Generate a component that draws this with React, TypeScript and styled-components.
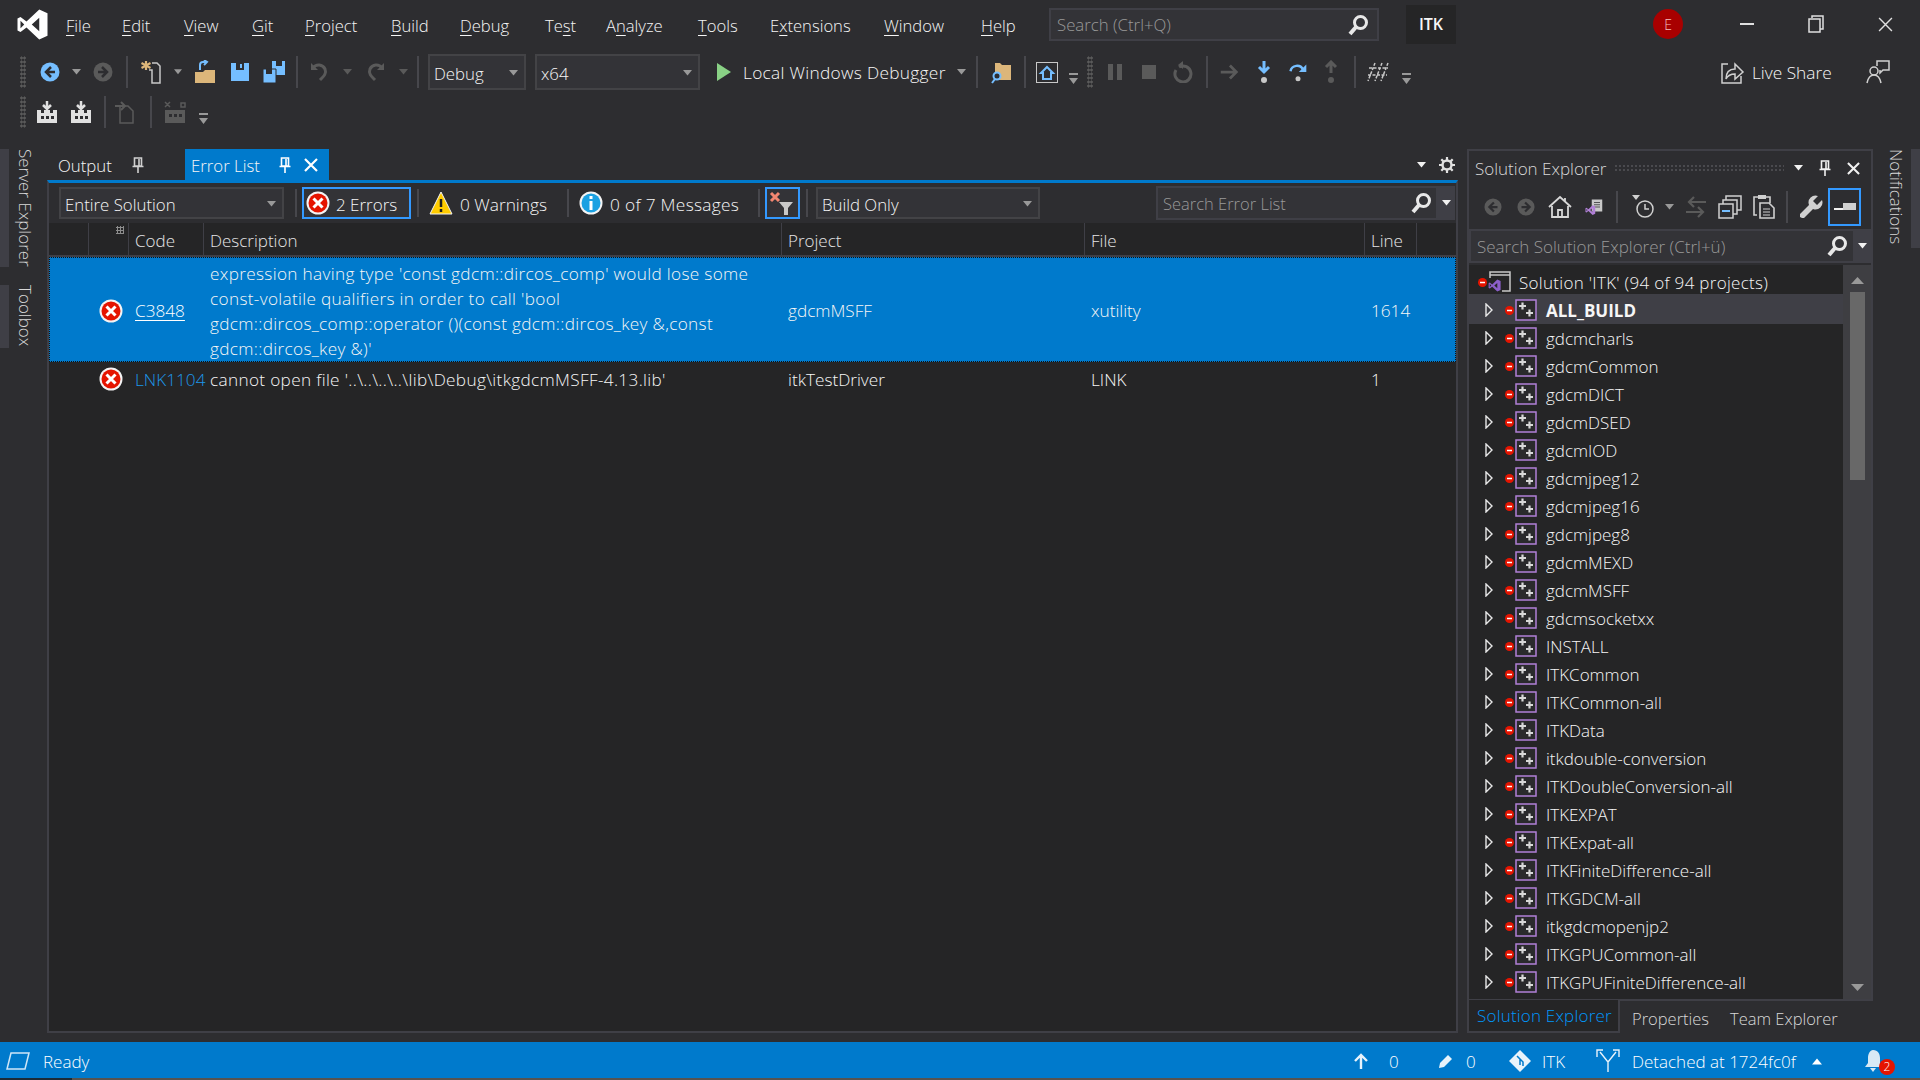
import { ReactNode } from 'react';
import styled, { createGlobalStyle } from 'styled-components';

const GlobalStyle = createGlobalStyle`
  *, *::before, *::after { box-sizing: border-box; }
  html, body { margin: 0; padding: 0; background: #2d2d30; }
  body { font-family: "Open Sans", "Noto Sans", sans-serif; font-size: 16px; font-weight: 300; color: #f6f6f6; overflow: hidden; }
`;

const MENU: Array<[string, string, string, number]> = [
  ['', 'F', 'ile', 56],
  ['', 'E', 'dit', 62],
  ['', 'V', 'iew', 68],
  ['', 'G', 'it', 53],
  ['', 'P', 'roject', 86],
  ['', 'B', 'uild', 69],
  ['', 'D', 'ebug', 85],
  ['Te', 's', 't', 61],
  ['A', 'n', 'alyze', 92],
  ['', 'T', 'ools', 72],
  ['E', 'x', 'tensions', 114],
  ['', 'W', 'indow', 97],
  ['', 'H', 'elp', 68],
];

const PROJECTS = [
  'ALL_BUILD', 'gdcmcharls', 'gdcmCommon', 'gdcmDICT', 'gdcmDSED', 'gdcmIOD', 'gdcmjpeg12', 'gdcmjpeg16',
  'gdcmjpeg8', 'gdcmMEXD', 'gdcmMSFF', 'gdcmsocketxx', 'INSTALL', 'ITKCommon', 'ITKCommon-all', 'ITKData',
  'itkdouble-conversion', 'ITKDoubleConversion-all', 'ITKEXPAT', 'ITKExpat-all', 'ITKFiniteDifference-all',
  'ITKGDCM-all', 'itkgdcmopenjp2', 'ITKGPUCommon-all', 'ITKGPUFiniteDifference-all',
];

const VS_PATH = 'M15.5 1L21 3.5v15L15.5 21 7 13l-4 3-2-1V7l2-1 4 3zM15.5 6.5L10.5 11l5 4.5zM3 8.5v5L5.5 11z';

const Svg = ({ s = 20, v = 20, children }: { s?: number; v?: number; children: ReactNode }) => (
  <svg width={s} height={s} viewBox={`0 0 ${v} ${v}`} fill="none">{children}</svg>
);

const Caret = ({ c = '#999' }: { c?: string }) => (
  <svg width="9" height="6" viewBox="0 0 9 6"><path d="M0 0h9L4.5 5.5z" fill={c} /></svg>
);

const Overflow = () => (
  <svg width="9" height="12" viewBox="0 0 9 12"><path d="M0 0h9v2H0zM0 5h9L4.5 11z" fill="#999" /></svg>
);

const NavBack = ({ c = '#75beff', s = 20 }: { c?: string; s?: number }) => (
  <Svg s={s}><circle cx="10" cy="10" r="9.5" fill={c} /><path d="M11 5l-5 5 5 5M6 10h9" stroke="#2d2d30" strokeWidth="2.5" /></Svg>
);

const NavFwd = ({ c = '#5a5a5a', s = 20 }: { c?: string; s?: number }) => (
  <Svg s={s}><circle cx="10" cy="10" r="9.5" fill={c} /><path d="M9 5l5 5-5 5M14 10H5" stroke="#2d2d30" strokeWidth="2.5" /></Svg>
);

const NewProject = () => (
  <Svg s={24} v={24}>
    <path d="M12 3h5l3 3v17h-8V10H9" stroke="#c8c8c8" strokeWidth="1.5" />
    <path d="M6 1v9M1.5 3l9 5M10.5 3l-9 5" stroke="#dcb67a" strokeWidth="2.2" />
  </Svg>
);

const OpenFolder = () => (
  <Svg s={24} v={24}>
    <path d="M2 12h8l2-2h10v13H2z" fill="#dcb67a" />
    <path d="M7 10V5a3 3 0 0 1 3-3l3 0M11 0l3 2-3 3" stroke="#75beff" strokeWidth="2" />
  </Svg>
);

const SaveIcon = () => (
  <Svg s={20}>
    <path d="M1 1h18v18H1z" fill="#75beff" />
    <path d="M6 1h8v7H6z" fill="#2d2d30" />
    <path d="M10 2h2v4h-2z" fill="#75beff" />
  </Svg>
);

const SaveAll = () => (
  <Svg s={24} v={24}>
    <path d="M10 1h13v14H10z" fill="#75beff" /><path d="M14 1h6v5h-6z" fill="#2d2d30" />
    <path d="M1 9h13v14H1z" fill="#75beff" stroke="#2d2d30" /><path d="M4 9h6v5H4z" fill="#2d2d30" />
  </Svg>
);

const Undo = () => (
  <Svg s={24} v={24}>
    <path d="M3 3v7h7z" fill="#5a5a5a" />
    <path d="M5 8a7 7 0 0 1 12 1c2 5-2 8-5 11" stroke="#5a5a5a" strokeWidth="3" />
  </Svg>
);

const Redo = () => (
  <Svg s={24} v={24}>
    <path d="M21 3v7h-7z" fill="#5a5a5a" />
    <path d="M19 8a7 7 0 0 0-12 1c-2 5 2 8 5 11" stroke="#5a5a5a" strokeWidth="3" />
  </Svg>
);

const Play = () => (
  <svg width="14" height="18" viewBox="0 0 14 18"><path d="M0 0l14 9-14 9z" fill="#89d185" /></svg>
);

const FindFolder = () => (
  <Svg s={24} v={24}>
    <path d="M6 3h5l2 2h9v15H6z" fill="#dcb67a" />
    <circle cx="8" cy="16" r="3.5" fill="#2d2d30" stroke="#75beff" strokeWidth="2" />
    <path d="M6 19l-3 4" stroke="#75beff" strokeWidth="2" />
  </Svg>
);

const HomeBox = () => (
  <Svg s={24} v={24}>
    <rect x="1.5" y="2.5" width="21" height="20" stroke="#c8c8c8" />
    <path d="M12 7l6 6h-2v6h-8v-6H6z" stroke="#75beff" strokeWidth="2" />
  </Svg>
);

const Pause = () => (
  <svg width="14" height="16" viewBox="0 0 14 16"><path d="M0 0h5v16H0zM9 0h5v16H9z" fill="#5a5a5a" /></svg>
);

const StopIcon = () => (
  <svg width="14" height="14" viewBox="0 0 14 14"><path d="M0 0h14v14H0z" fill="#5a5a5a" /></svg>
);

const Restart = () => (
  <Svg s={22} v={22}>
    <path d="M7 6a8 8 0 1 1-3 3" stroke="#5a5a5a" strokeWidth="3" />
    <path d="M11 0v8L6 4z" fill="#5a5a5a" />
  </Svg>
);

const NextArrow = () => (
  <Svg s={24} v={24}><path d="M3 12h17M13 5l7 7-7 7" stroke="#5a5a5a" strokeWidth="3" /></Svg>
);

const StepInto = () => (
  <Svg s={24} v={24}>
    <path d="M12 1v10M7 7l5 5 5-5" stroke="#75beff" strokeWidth="3" />
    <circle cx="12" cy="20" r="3" fill="#c8c8c8" />
  </Svg>
);

const StepOver = () => (
  <Svg s={24} v={24}>
    <path d="M3 11a8 8 0 0 1 15-2" stroke="#75beff" strokeWidth="3" />
    <path d="M22 3v9h-9z" fill="#75beff" />
    <circle cx="12" cy="20" r="3" fill="#c8c8c8" />
  </Svg>
);

const StepOut = () => (
  <Svg s={24} v={24}>
    <path d="M12 13V3M7 7l5-5 5 5" stroke="#5a5a5a" strokeWidth="3" />
    <circle cx="12" cy="20" r="3" fill="#5a5a5a" />
  </Svg>
);

const CommentIcon = () => (
  <Svg s={24} v={24}>
    <path d="M9 3L2 21M16 3L9 21M22 3l-7 18M3 8h19M2 15h19" stroke="#c8c8c8" strokeWidth="1.5" strokeDasharray="3 1.5" />
  </Svg>
);

const BuildIcon = ({ c = '#e0e0e0' }: { c?: string }) => (
  <Svg s={24} v={24}>
    <path d="M12 1v7M8 5l4 4 4-4" stroke={c} strokeWidth="2.5" />
    <path d="M2 10h4v3h3v-3h6v3h3v-3h4v13H2z" fill={c} />
    <path d="M6 16h3v3H6zM11 16h3v3h-3zM16 16h3v3h-3z" fill="#2d2d30" />
  </Svg>
);

const PageIn = () => (
  <Svg s={24} v={24}>
    <path d="M6 6h8l5 5v12H6z" stroke="#5a5a5a" strokeWidth="1.5" />
    <path d="M1 6h9M7 2l4 4-4 4" stroke="#5a5a5a" strokeWidth="2" />
  </Svg>
);

const BuildOff = () => (
  <Svg s={24} v={24}>
    <path d="M2 2l5 5M7 2L2 7M18 3h4v4h-4z" stroke="#5a5a5a" strokeWidth="1.5" />
    <path d="M2 10h20v13H2z" fill="#5a5a5a" />
    <path d="M6 14h3v3H6zM11 14h3v3h-3zM16 14h3v3h-3z" fill="#2d2d30" />
  </Svg>
);

const ShareIcon = () => (
  <Svg s={26} v={26}>
    <path d="M9 5H3v19h19v-7" stroke="#d0d0d0" strokeWidth="1.5" />
    <path d="M7 20c0-7 4-10 9-10V5l8 8-8 7v-5c-4 0-7 1-9 5z" stroke="#d0d0d0" strokeWidth="1.5" />
  </Svg>
);

const FeedbackIcon = () => (
  <Svg s={24} v={24}>
    <circle cx="8" cy="11" r="4" stroke="#d0d0d0" strokeWidth="1.5" />
    <path d="M1 23c1-5 3-8 7-8s6 3 7 8M11 6V1h12v9h-6l-3 3v-3" stroke="#d0d0d0" strokeWidth="1.5" />
  </Svg>
);

const Magnifier = ({ s = 22 }: { s?: number }) => (
  <Svg s={s} v={22}>
    <circle cx="13.5" cy="8.5" r="6" stroke="#e8e8e8" strokeWidth="3" />
    <path d="M9 13l-6 7" stroke="#e8e8e8" strokeWidth="4" />
  </Svg>
);

const PinIcon = ({ c = '#d0d0d0' }: { c?: string }) => (
  <svg width="12" height="16" viewBox="0 0 12 16"><path d="M2.5 1h7v8h-7zM7 2v7M0.500 9.5h11M6 10v6" stroke={c} strokeWidth="1.6" fill="none" /></svg>
);

const CloseX = ({ s = 14, w = 2, c = '#f1f1f1' }: { s?: number; w?: number; c?: string }) => (
  <svg width={s} height={s} viewBox="0 0 14 14"><path d="M1 1l12 12M13 1L1 13" stroke={c} strokeWidth={w} /></svg>
);

const Gear = () => (
  <Svg s={16} v={16}>
    <circle cx="8" cy="8" r="4.5" stroke="#e0e0e0" strokeWidth="2.5" />
    <path d="M8 0v3M8 13v3M0 8h3M13 8h3M2.3 2.3l2.1 2.1M11.6 11.6l2.1 2.1M13.7 2.3l-2.1 2.1M4.4 11.6l-2.1 2.1" stroke="#e0e0e0" strokeWidth="2.2" />
  </Svg>
);

const ErrorIcon = () => (
  <Svg s={24} v={24}>
    <circle cx="12" cy="12" r="11.5" fill="#f4f4f4" />
    <circle cx="12" cy="12" r="9.5" fill="#e51400" />
    <path d="M7.5 7.5l9 9M16.5 7.5l-9 9" stroke="#fff" strokeWidth="3" />
  </Svg>
);

const WarningIcon = () => (
  <Svg s={24} v={24}>
    <path d="M12 1l11 22H1z" fill="#ffcc00" stroke="#f4f4f4" />
    <path d="M12 8v8M12 18v3" stroke="#1e1e1e" strokeWidth="2.5" />
  </Svg>
);

const InfoIcon = () => (
  <Svg s={24} v={24}>
    <circle cx="12" cy="12" r="11.5" fill="#f4f4f4" />
    <circle cx="12" cy="12" r="9.5" fill="#1ba1e2" />
    <path d="M12 10v9M12 5v3" stroke="#fff" strokeWidth="3" />
  </Svg>
);

const FilterError = () => (
  <Svg s={26} v={26}>
    <path d="M2 3l8 8M10 3l-8 8" stroke="#f48771" strokeWidth="3" />
    <path d="M10 12h14l-5 6v7h-4v-7z" fill="#c8c8c8" />
  </Svg>
);

const HomeIcon = () => (
  <Svg s={24} v={24}>
    <path d="M1 12L12 2l11 10M4 11v11h16V11M10 22v-7h4v7M17 3v4" stroke="#d8d8d8" strokeWidth="1.8" />
  </Svg>
);

const VsDoc = () => (
  <svg width="24" height="24" viewBox="0 0 24 24">
    <path d="M9 2h14v16H9z" fill="#c8c8c8" />
    <path d="M12 6h8M12 9h8M12 12h8" stroke="#2d2d30" />
    <path transform="translate(0 9) scale(.65)" fillRule="evenodd" d={VS_PATH} fill="#b180d7" />
  </svg>
);

const HistoryIcon = () => (
  <Svg s={28} v={28}>
    <path d="M1 2h8L5 7z" fill="#d0d0d0" />
    <circle cx="14" cy="16" r="8" stroke="#d0d0d0" strokeWidth="1.5" />
    <path d="M14 11v5h4" stroke="#d0d0d0" strokeWidth="1.5" />
  </Svg>
);

const SyncIcon = () => (
  <Svg s={24} v={24}>
    <path d="M22 7H5M10 2L5 7l5 5M2 17h17M14 12l5 5-5 5" stroke="#5a5a5a" strokeWidth="2.2" />
  </Svg>
);

const CollapseAll = () => (
  <Svg s={24} v={24}>
    <path d="M8 5V1h15v14h-4M5 9V5h14v14h-4" stroke="#d0d0d0" strokeWidth="1.5" />
    <path d="M1 9h14v14H1z" fill="#2d2d30" stroke="#d0d0d0" strokeWidth="1.5" />
    <path d="M4 16h8" stroke="#75beff" strokeWidth="2" />
  </Svg>
);

const PagesIcon = () => (
  <Svg s={24} v={24}>
    <path d="M5 20H2V2h16v6" stroke="#d0d0d0" strokeWidth="1.6" />
    <path d="M6 0h8v4H6z" fill="#d0d0d0" />
    <path d="M8 8h9l5 5v10H8z" stroke="#d0d0d0" strokeWidth="1.6" />
    <path d="M11 14h7M11 17h7M11 20h7" stroke="#d0d0d0" />
  </Svg>
);

const Wrench = () => (
  <Svg s={24} v={24}>
    <path d="M23 5l-5 5-4-4 5-5a7 7 0 0 0-9 9L1 19v3l2 1h2l9-9a7 7 0 0 0 9-9z" fill="#d0d0d0" />
  </Svg>
);

const PreviewIcon = () => (
  <svg width="22" height="8" viewBox="0 0 22 8"><path d="M0 5h9V0h13v7H0z" fill="#d0d0d0" /><path d="M0 5h9v2H0z" fill="#f1f1f1" /></svg>
);

const MinusDot = () => (
  <svg width="9" height="9" viewBox="0 0 9 9"><circle cx="4.5" cy="4.5" r="4.5" fill="#e51400" /><path d="M2 4.5h5" stroke="#fff" strokeWidth="1.5" /></svg>
);

const Expander = () => (
  <svg width="8" height="14" viewBox="0 0 8 14"><path d="M1 1l6 6-6 6z" stroke="#e8e8e8" strokeWidth="1.4" fill="none" /></svg>
);

const ProjectIcon = () => (
  <svg width="22" height="22" viewBox="0 0 22 22">
    <rect x="1" y="1" width="20" height="20" fill="#2a2a2c" stroke="#b180d7" strokeWidth="1.5" />
    <path d="M4 7h7M7.500 3.500v7" stroke="#d8d8d8" strokeWidth="2.2" />
    <path d="M11 14h7M14.500 10.500v7" stroke="#d8d8d8" strokeWidth="2.2" />
  </svg>
);

const SolutionIcon = () => (
  <svg width="22" height="22" viewBox="0 0 22 22" style={{ overflow: 'visible' }}>
    <path d="M1 7V1h20v19h-8M1 4h20" stroke="#c8c8c8" strokeWidth="1.5" fill="none" />
    <path transform="translate(-1 8) scale(.6)" fillRule="evenodd" d={VS_PATH} fill="#8c5fc9" />
  </svg>
);

const ReadyIcon = () => (
  <svg width="24" height="18" viewBox="0 0 24 18"><path d="M5 1h18l-4 16H1z" stroke="#cfe6f7" strokeWidth="1.5" fill="none" /></svg>
);

const UpArrow = () => (
  <svg width="14" height="16" viewBox="0 0 14 16"><path d="M7 16V2M1 8l6-6 6 6" stroke="#e8f3fb" strokeWidth="2.4" fill="none" /></svg>
);

const Pencil = () => (
  <svg width="16" height="16" viewBox="0 0 16 16"><path d="M1 15l1-5 8-8 4 4-8 8z" fill="#e8f3fb" /></svg>
);

const GitDiamond = () => (
  <svg width="22" height="22" viewBox="0 0 22 22">
    <path d="M11 0l11 11-11 11L0 11z" fill="#e8f3fb" />
    <path d="M8 6l6 6v4M11 9v6" stroke="#007acc" strokeWidth="1.5" fill="none" />
  </svg>
);

const BranchIcon = () => (
  <svg width="24" height="24" viewBox="0 0 24 24">
    <path d="M12 23V13L4 3M12 13l8-10M1 8V1h6M17 1h6v7" stroke="#e8f3fb" strokeWidth="1.4" fill="none" />
  </svg>
);

const Bell = () => (
  <svg width="24" height="26" viewBox="0 0 24 26">
    <path d="M11 2c5 0 7 4 7 8v5l3 4H3l3-4v-5c0-4 2-8 5-8zM8 20h6l-3 4z" fill="#d8e9f5" />
  </svg>
);

const Page = styled.div`
  width: 1920px;
  height: 1080px;
  display: flex;
  flex-direction: column;
  background: #2d2d30;
  overflow: hidden;
`;

const TitleBar = styled.div`
  height: 48px;
  display: flex;
  align-items: center;
  flex: none;
`;

const Logo = styled.div`
  width: 66px;
  padding-left: 16px;
  display: flex;
`;

const MenuItem = styled.div<{ $w: number }>`
  width: ${(p) => p.$w}px;
  flex: none;
  font-size: 16.6px;
  white-space: nowrap;
  padding-top: 2px;
`;

const Key = styled.span`
  text-decoration: underline;
  text-underline-offset: 3px;
`;

const QuickSearch = styled.div`
  width: 330px;
  height: 33px;
  background: #333337;
  border: 2px solid #3f3f46;
  display: flex;
  align-items: center;
  justify-content: space-between;
  padding: 1px 8px 0 6px;
  color: #999999;
  font-size: 16.8px;
`;

const SolutionName = styled.div`
  width: 50px;
  height: 39px;
  margin-left: 27px;
  background: #252526;
  display: flex;
  align-items: center;
  justify-content: center;
  font-weight: 600;
  font-size: 16px;
  flex: none;
`;

const Avatar = styled.div`
  width: 30px;
  height: 30px;
  margin-left: 197px;
  border-radius: 50%;
  background: #a80000;
  display: flex;
  align-items: center;
  justify-content: center;
  font-size: 14px;
  color: #f4c0c0;
  flex: none;
`;

const WinButton = styled.div<{ $ml: number }>`
  width: 46px;
  height: 30px;
  margin-left: ${(p) => p.$ml}px;
  display: flex;
  align-items: center;
  justify-content: center;
  flex: none;
`;

const ToolRow = styled.div<{ $h: number; $mb?: number }>`
  height: ${(p) => p.$h}px;
  margin-bottom: ${(p) => p.$mb ?? 0}px;
  padding-left: 16px;
  display: flex;
  align-items: center;
  flex: none;
`;

const Slot = styled.div<{ $w: number; $ml?: number }>`
  width: ${(p) => p.$w}px;
  margin-left: ${(p) => p.$ml ?? 0}px;
  height: 36px;
  display: flex;
  align-items: center;
  justify-content: center;
  flex: none;
`;

const OverflowSlot = styled(Slot)`
  padding-top: 14px;
`;

const Grip = styled.div`
  width: 6px;
  height: 32px;
  background-image: radial-gradient(#5a5a5a 1px, transparent 1.3px);
  background-size: 3px 4px;
`;

const ToolSep = styled.div`
  width: 2px;
  height: 32px;
  background: #47474c;
`;

const Combo = styled.div<{ $w: number; $h?: number; $ml?: number }>`
  width: ${(p) => p.$w}px;
  height: ${(p) => p.$h ?? 36}px;
  margin-left: ${(p) => p.$ml ?? 0}px;
  background: #333337;
  border: 2px solid #434346;
  display: flex;
  align-items: center;
  justify-content: space-between;
  padding: 2px 6px 0 4px;
  font-size: 16.8px;
  flex: none;
`;

const ToolText = styled.div<{ $w: number; $ml?: number; $ls?: number }>`
  width: ${(p) => p.$w}px;
  margin-left: ${(p) => p.$ml ?? 0}px;
  flex: none;
  font-size: 17.3px;
  letter-spacing: ${(p) => p.$ls ?? 0}px;
  white-space: nowrap;
`;

const Spacer = styled.div`
  flex: 1;
`;

const Main = styled.div`
  flex: 1;
  min-height: 0;
  display: flex;
  padding-bottom: 9px;
`;

const Rail = styled.div`
  width: 47px;
  flex: none;
  display: flex;
  flex-direction: column;
  gap: 18px;
`;

const RightRail = styled(Rail)`
  align-items: flex-end;
`;

const VerticalTab = styled.div<{ $h: number; $right?: boolean }>`
  height: ${(p) => p.$h}px;
  width: ${(p) => (p.$right ? 33 : 34)}px;
  ${(p) => (p.$right ? 'border-right: 9px solid #3f3f46; padding-right: 6px;' : 'border-left: 9px solid #3f3f46; padding-left: 6px;')}
  writing-mode: vertical-rl;
  font-size: 17px;
  line-height: 18px;
  color: #d8d8d8;
  white-space: nowrap;
`;

const DocPanel = styled.div`
  width: 1411px;
  flex: none;
  display: flex;
  flex-direction: column;
`;

const TabStrip = styled.div`
  height: 31px;
  margin-left: 2px;
  display: flex;
  align-items: stretch;
  flex: none;
`;

const DocTab = styled.div<{ $w: number; $active?: boolean }>`
  width: ${(p) => p.$w}px;
  padding: 1px 0 0 ${(p) => (p.$active ? 6 : 9)}px;
  background: ${(p) => (p.$active ? '#007acc' : 'transparent')};
  display: flex;
  align-items: center;
  font-size: 16.8px;
  flex: none;
`;

const TabLabel = styled.span<{ $w: number }>`
  width: ${(p) => p.$w}px;
  flex: none;
`;

const TabEnd = styled.div`
  margin-left: 13px;
  display: flex;
  align-items: center;
`;

const StripControls = styled.div`
  display: flex;
  align-items: center;
  gap: 13px;
  margin-right: 3px;
`;

const DocBody = styled.div`
  flex: 1;
  min-height: 0;
  border: 2px solid #3f3f46;
  border-top: 3px solid #007acc;
  background: #252526;
  display: flex;
  flex-direction: column;
`;

const DocToolbar = styled.div`
  height: 40px;
  background: #2d2d30;
  display: flex;
  align-items: center;
  flex: none;

  ${ToolText} {
    padding-top: 2px;
  }
`;

const PanelSep = styled.div<{ $ml: number }>`
  width: 2px;
  height: 28px;
  margin-left: ${(p) => p.$ml}px;
  background: #47474c;
  flex: none;
`;

const ScopeButton = styled.div<{ $w: number; $ml: number }>`
  width: ${(p) => p.$w}px;
  height: 32px;
  margin-left: ${(p) => p.$ml}px;
  border: 2px solid #3399ff;
  background: #333337;
  display: flex;
  align-items: center;
  justify-content: flex-start;
  padding-left: 2px;
  gap: 6px;
  white-space: nowrap;
  flex: none;
`;

const ScopeLabel = styled.span`
  font-size: 17px;
  padding-top: 2px;
`;

const ScopeIcon = styled.div<{ $ml: number }>`
  width: 24px;
  margin-left: ${(p) => p.$ml}px;
  display: flex;
  flex: none;
`;

const SearchBox = styled.div<{ $w: number; $ml: number }>`
  width: ${(p) => p.$w}px;
  height: 34px;
  margin-left: ${(p) => p.$ml}px;
  background: #333337;
  border: 2px solid #3f3f46;
  display: flex;
  align-items: center;
  justify-content: space-between;
  padding: 0 4px 0 5px;
  font-size: 16.5px;
  color: #999999;
  flex: none;
`;

const SearchDrop = styled.div`
  width: 17px;
  height: 34px;
  background: #3f3f46;
  display: flex;
  align-items: center;
  justify-content: center;
  flex: none;
`;

const TableGrid = styled.div`
  display: grid;
  grid-template-columns: 40px 40px 75px 578px 303px 280px 52px 39px;
`;

const HeadCell = styled.div<{ $edge?: boolean }>`
  height: 34px;
  padding: 2px 0 0 6px;
  display: flex;
  align-items: center;
  font-size: 17px;
  color: #e6e6e6;
  border-bottom: 2px solid #3f3f46;
  border-right: ${(p) => (p.$edge ? 'none' : '1px solid #3f3f46')};
  background: #252526;
  position: relative;
`;

const SortDots = styled.span`
  position: absolute;
  top: 3px;
  right: 4px;
  width: 8px;
  height: 8px;
  background-image: radial-gradient(#8c8c8c 1px, transparent 1.2px);
  background-size: 3px 3px;
`;

const RowCells = styled.div<{ $selected?: boolean; $h: number }>`
  display: grid;
  grid-column: 1 / -1;
  grid-template-columns: subgrid;
  height: ${(p) => p.$h}px;
  padding-top: ${(p) => (p.$selected ? 2 : 0)}px;
  align-items: center;
  background: ${(p) => (p.$selected ? '#007acc' : 'transparent')};
  outline: ${(p) => (p.$selected ? '1px dotted #111' : 'none')};
  outline-offset: -1px;
  font-size: 17.2px;
`;

const IconCell = styled.div`
  grid-column: 2;
  display: flex;
  justify-content: center;
  padding-left: 4px;
`;

const Cell = styled.div`
  padding-left: 6px;
  white-space: nowrap;
`;

const ErrorCode = styled(Cell)<{ $selected?: boolean }>`
  color: ${(p) => (p.$selected ? '#ffffff' : '#1c97ea')};
  text-decoration: ${(p) => (p.$selected ? 'underline' : 'none')};
  text-underline-offset: 3px;
`;

const Description = styled(Cell)`
  line-height: 25px;
  letter-spacing: 0.33px;
`;

const SidePanel = styled.div`
  width: 406px;
  margin-left: 9px;
  flex: none;
  display: flex;
  flex-direction: column;
`;

const SideBody = styled.div`
  flex: 1;
  min-height: 0;
  border: 2px solid #3f3f46;
  display: flex;
  flex-direction: column;
`;

const SideHeader = styled.div`
  height: 34px;
  display: flex;
  align-items: center;
  padding: 0 11px 0 6px;
  font-size: 17px;
  color: #d8d8d8;
  flex: none;
`;

const TitleGrip = styled.div`
  flex: 1;
  height: 8px;
  margin: 0 10px 0 8px;
  background-image: radial-gradient(#4a4a4e 1px, transparent 1.2px);
  background-size: 4px 4px;
`;

const SideIcons = styled.div`
  display: flex;
  align-items: center;
  gap: 16px;
`;

const SideToolbar = styled.div`
  height: 43px;
  display: flex;
  align-items: center;
  flex: none;
`;

const ToggleButton = styled.div`
  width: 33px;
  height: 38px;
  border: 2px solid #3399ff;
  display: flex;
  align-items: center;
  justify-content: center;
  flex: none;
`;

const SideSearchRow = styled.div`
  height: 34px;
  margin-top: 1px;
  background: #3f3f46;
  display: flex;
  align-items: center;
  flex: none;
`;

const SideSearch = styled.div`
  width: 382px;
  height: 30px;
  margin-left: 2px;
  background: #333337;
  display: flex;
  align-items: center;
  justify-content: space-between;
  padding: 0 5px 0 6px;
  font-size: 17px;
  color: #999999;
  flex: none;
`;

const SideDrop = styled.div`
  flex: 1;
  display: flex;
  justify-content: center;
`;

const TreeWrap = styled.div`
  flex: 1;
  min-height: 0;
  margin-top: 2px;
  display: flex;
  background: #252526;
`;

const Tree = styled.div`
  flex: 1;
  padding-top: 3px;
`;

const TreeRow = styled.div<{ $selected?: boolean }>`
  height: 28px;
  display: flex;
  align-items: center;
  font-size: 17px;
  white-space: nowrap;
  font-weight: ${(p) => (p.$selected ? 700 : 300)};
  background: ${(p) => (p.$selected ? '#3f3f46' : 'transparent')};
  box-shadow: ${(p) => (p.$selected ? '0 -2px 0 #3f3f46' : 'none')};
`;

const SolutionLabel = styled.span`
  letter-spacing: 0.3px;
`;

const RowExpander = styled.div`
  width: 36px;
  padding-left: 16px;
  display: flex;
  flex: none;
`;

const RowDot = styled.div<{ $w: number; $pl: number }>`
  width: ${(p) => p.$w}px;
  padding-left: ${(p) => p.$pl}px;
  display: flex;
  flex: none;
`;

const RowIcon = styled.div<{ $w: number }>`
  width: ${(p) => p.$w}px;
  display: flex;
  flex: none;
`;

const ScrollBar = styled.div`
  width: 28px;
  flex: none;
  background: #3e3e42;
  display: flex;
  flex-direction: column;
  align-items: center;
  padding: 12px 0 8px;
`;

const Thumb = styled.div`
  width: 15px;
  height: 188px;
  margin-top: 8px;
  background: #686868;
  flex: none;
`;

const SideTabs = styled.div`
  height: 32px;
  display: flex;
  align-items: center;
  flex: none;
`;

const ActiveSideTab = styled.div`
  width: 153px;
  height: 33px;
  margin-top: -2px;
  border: 2px solid #3f3f46;
  border-top: none;
  background: #252526;
  padding: 1px 0 0 8px;
  display: flex;
  align-items: center;
  font-size: 17px;
  letter-spacing: 0.2px;
  white-space: nowrap;
  color: #0097fb;
  flex: none;
`;

const SideTab = styled.div<{ $w: number; $ml?: number }>`
  width: ${(p) => p.$w}px;
  margin-left: ${(p) => p.$ml ?? 0}px;
  font-size: 16.5px;
  padding-top: 2px;
  white-space: nowrap;
  color: #d8d8d8;
  flex: none;
`;

const StatusBar = styled.div`
  height: 36px;
  background: #007acc;
  display: flex;
  align-items: center;
  padding: 2px 0 0 6px;
  font-size: 17px;
  color: #ffffff;
  flex: none;
`;

const StatusItem = styled.div<{ $w: number }>`
  width: ${(p) => p.$w}px;
  display: flex;
  align-items: center;
  white-space: nowrap;
  flex: none;
`;

const BellWrap = styled.div`
  position: relative;
  margin-left: 40px;
  display: flex;
  flex: none;
`;

const Badge = styled.span`
  position: absolute;
  top: 11px;
  left: 17px;
  width: 16px;
  height: 16px;
  border-radius: 50%;
  background: #e51400;
  font-size: 12px;
  line-height: 16px;
  text-align: center;
  color: #fff;
`;

const TaskEdge = styled.div`
  height: 2px;
  flex: none;
  display: flex;
`;

const EdgePart = styled.div<{ $w?: number; $c: string }>`
  flex: ${(p) => (p.$w ? `0 0 ${p.$w}px` : 1)};
  background: ${(p) => p.$c};
`;

const App = () => (
  <Page>
    <GlobalStyle />
    <TitleBar>
      <Logo>
        <svg width="33" height="33" viewBox="0 0 22 22">
          <path fillRule="evenodd" d={VS_PATH} fill="#ffffff" />
        </svg>
      </Logo>
      {MENU.map(([before, key, after, w]) => (
        <MenuItem key={key + after} $w={w}>{before}<Key>{key}</Key>{after}</MenuItem>
      ))}
      <QuickSearch>
        Search (Ctrl+Q)
        <Magnifier />
      </QuickSearch>
      <SolutionName>ITK</SolutionName>
      <Avatar>E</Avatar>
      <WinButton $ml={41}><svg width="14" height="2"><path d="M0 1h14" stroke="#e0e0e0" strokeWidth="2" /></svg></WinButton>
      <WinButton $ml={23}>
        <svg width="16" height="18" viewBox="0 0 16 18"><path d="M4 3V1h11v13h-3M1 4h11v13H1z" stroke="#e0e0e0" strokeWidth="1.5" fill="none" /></svg>
      </WinButton>
      <WinButton $ml={23}><CloseX s={15} w={1.3} c="#e0e0e0" /></WinButton>
    </TitleBar>

    <ToolRow $h={48}>
      <Slot $w={14}><Grip /></Slot>
      <Slot $w={40}><NavBack /></Slot>
      <Slot $w={12}><Caret /></Slot>
      <Slot $w={42}><NavFwd /></Slot>
      <Slot $w={6}><ToolSep /></Slot>
      <Slot $w={44}><NewProject /></Slot>
      <Slot $w={8}><Caret /></Slot>
      <Slot $w={46}><OpenFolder /></Slot>
      <Slot $w={24}><SaveIcon /></Slot>
      <Slot $w={44}><SaveAll /></Slot>
      <Slot $w={2}><ToolSep /></Slot>
      <Slot $w={44}><Undo /></Slot>
      <Slot $w={10}><Caret c="#5a5a5a" /></Slot>
      <Slot $w={46}><Redo /></Slot>
      <Slot $w={10}><Caret c="#5a5a5a" /></Slot>
      <Slot $w={20}><ToolSep /></Slot>
      <Combo $w={98}>Debug<Caret /></Combo>
      <Combo $w={165} $ml={9}>x64<Caret /></Combo>
      <Slot $w={34} $ml={7}><Play /></Slot>
      <ToolText $w={203} $ml={2} $ls={0.3}>Local Windows Debugger</ToolText>
      <Slot $w={30}><Caret /></Slot>
      <Slot $w={2}><ToolSep /></Slot>
      <Slot $w={46}><FindFolder /></Slot>
      <Slot $w={2}><ToolSep /></Slot>
      <Slot $w={42}><HomeBox /></Slot>
      <OverflowSlot $w={10}><Overflow /></OverflowSlot>
      <Slot $w={24}><Grip /></Slot>
      <Slot $w={26}><Pause /></Slot>
      <Slot $w={42}><StopIcon /></Slot>
      <Slot $w={26}><Restart /></Slot>
      <Slot $w={22}><ToolSep /></Slot>
      <Slot $w={22}><NextArrow /></Slot>
      <Slot $w={48}><StepInto /></Slot>
      <Slot $w={20}><StepOver /></Slot>
      <Slot $w={46}><StepOut /></Slot>
      <Slot $w={2}><ToolSep /></Slot>
      <Slot $w={44}><CommentIcon /></Slot>
      <OverflowSlot $w={12}><Overflow /></OverflowSlot>
      <Slot $w={26} $ml={307}><ShareIcon /></Slot>
      <ToolText $w={78} $ml={7}>Live Share</ToolText>
      <Slot $w={24} $ml={36}><FeedbackIcon /></Slot>
    </ToolRow>

    <ToolRow $h={32} $mb={21}>
      <Slot $w={14}><Grip /></Slot>
      <Slot $w={34}><BuildIcon /></Slot>
      <Slot $w={34}><BuildIcon /></Slot>
      <Slot $w={14}><ToolSep /></Slot>
      <Slot $w={28}><PageIn /></Slot>
      <Slot $w={22}><ToolSep /></Slot>
      <Slot $w={26}><BuildOff /></Slot>
      <OverflowSlot $w={30}><Overflow /></OverflowSlot>
    </ToolRow>

    <Main>
      <Rail>
        <VerticalTab $h={118}>Server Explorer</VerticalTab>
        <VerticalTab $h={63}>Toolbox</VerticalTab>
      </Rail>

      <DocPanel>
        <TabStrip>
          <DocTab $w={136}>
            <TabLabel $w={74}>Output</TabLabel>
            <PinIcon />
          </DocTab>
          <DocTab $w={144} $active>
            <TabLabel $w={88}>Error List</TabLabel>
            <PinIcon c="#ffffff" />
            <TabEnd><CloseX s={14} w={2.2} c="#ffffff" /></TabEnd>
          </DocTab>
          <Spacer />
          <StripControls>
            <Caret c="#f1f1f1" />
            <Gear />
          </StripControls>
        </TabStrip>
        <DocBody>
          <DocToolbar>
            <Combo $w={225} $h={32} $ml={10}>Entire Solution<Caret /></Combo>
            <PanelSep $ml={11} />
            <ScopeButton $w={109} $ml={5}><ErrorIcon /><ScopeLabel>2 Errors</ScopeLabel></ScopeButton>
            <PanelSep $ml={6} />
            <ScopeIcon $ml={10}><WarningIcon /></ScopeIcon>
            <ToolText $w={88} $ml={7}>0 Warnings</ToolText>
            <PanelSep $ml={19} />
            <ScopeIcon $ml={10}><InfoIcon /></ScopeIcon>
            <ToolText $w={129} $ml={7} $ls={0.3}>0 of 7 Messages</ToolText>
            <PanelSep $ml={19} />
            <ScopeButton $w={35} $ml={5}><FilterError /></ScopeButton>
            <PanelSep $ml={6} />
            <Combo $w={224} $h={32} $ml={8}>Build Only<Caret /></Combo>
            <SearchBox $w={282} $ml={116}>Search Error List<Magnifier /></SearchBox>
            <SearchDrop><Caret c="#f1f1f1" /></SearchDrop>
          </DocToolbar>
          <TableGrid>
            <HeadCell />
            <HeadCell><SortDots /></HeadCell>
            <HeadCell>Code</HeadCell>
            <HeadCell>Description</HeadCell>
            <HeadCell>Project</HeadCell>
            <HeadCell>File</HeadCell>
            <HeadCell>Line</HeadCell>
            <HeadCell $edge />
            <RowCells $selected $h={105}>
              <IconCell><ErrorIcon /></IconCell>
              <ErrorCode $selected>C3848</ErrorCode>
              <Description>
                expression having type 'const gdcm::dircos_comp' would lose some<br />
                const-volatile qualifiers in order to call 'bool<br />
                gdcm::dircos_comp::operator ()(const gdcm::dircos_key &amp;,const<br />
                gdcm::dircos_key &amp;)'
              </Description>
              <Cell>gdcmMSFF</Cell>
              <Cell>xutility</Cell>
              <Cell>1614</Cell>
            </RowCells>
            <RowCells $h={34}>
              <IconCell><ErrorIcon /></IconCell>
              <ErrorCode>LNK1104</ErrorCode>
              <Description>cannot open file '..\..\..\..\lib\Debug\itkgdcmMSFF-4.13.lib'</Description>
              <Cell>itkTestDriver</Cell>
              <Cell>LINK</Cell>
              <Cell>1</Cell>
            </RowCells>
          </TableGrid>
        </DocBody>
      </DocPanel>

      <SidePanel>
        <SideBody>
          <SideHeader>
            Solution Explorer
            <TitleGrip />
            <SideIcons>
              <Caret c="#f1f1f1" />
              <PinIcon c="#f1f1f1" />
              <CloseX s={13} w={2.2} />
            </SideIcons>
          </SideHeader>
          <SideToolbar>
            <Slot $w={48}><NavBack c="#5a5a5a" s={18} /></Slot>
            <Slot $w={18}><NavFwd s={18} /></Slot>
            <Slot $w={50}><HomeIcon /></Slot>
            <Slot $w={18}><VsDoc /></Slot>
            <Slot $w={28}><ToolSep /></Slot>
            <Slot $w={28}><HistoryIcon /></Slot>
            <Slot $w={20}><Caret /></Slot>
            <Slot $w={34}><SyncIcon /></Slot>
            <Slot $w={34}><CollapseAll /></Slot>
            <Slot $w={34}><PagesIcon /></Slot>
            <Slot $w={12}><ToolSep /></Slot>
            <Slot $w={35}><Wrench /></Slot>
            <ToggleButton><PreviewIcon /></ToggleButton>
          </SideToolbar>
          <SideSearchRow>
            <SideSearch>Search Solution Explorer (Ctrl+ü)<Magnifier /></SideSearch>
            <SideDrop><Caret c="#f1f1f1" /></SideDrop>
          </SideSearchRow>
          <TreeWrap>
            <Tree>
              <TreeRow>
                <RowDot $w={20} $pl={9}><MinusDot /></RowDot>
                <RowIcon $w={30}><SolutionIcon /></RowIcon>
                <SolutionLabel>Solution 'ITK' (94 of 94 projects)</SolutionLabel>
              </TreeRow>
              {PROJECTS.map((name, i) => (
                <TreeRow key={name} $selected={i === 0}>
                  <RowExpander><Expander /></RowExpander>
                  <RowDot $w={10} $pl={0}><MinusDot /></RowDot>
                  <RowIcon $w={31}><ProjectIcon /></RowIcon>
                  {name}
                </TreeRow>
              ))}
            </Tree>
            <ScrollBar>
              <svg width="13" height="7" viewBox="0 0 13 7"><path d="M6.5 0L13 7H0z" fill="#999" /></svg>
              <Thumb />
              <Spacer />
              <svg width="13" height="7" viewBox="0 0 13 7"><path d="M0 0h13L6.5 7z" fill="#999" /></svg>
            </ScrollBar>
          </TreeWrap>
        </SideBody>
        <SideTabs>
          <ActiveSideTab>Solution Explorer</ActiveSideTab>
          <SideTab $w={98} $ml={12}>Properties</SideTab>
          <SideTab $w={120}>Team Explorer</SideTab>
        </SideTabs>
      </SidePanel>

      <RightRail>
        <VerticalTab $h={99} $right>Notifications</VerticalTab>
      </RightRail>
    </Main>

    <StatusBar>
      <StatusItem $w={37}><ReadyIcon /></StatusItem>
      <StatusItem $w={1311}>Ready</StatusItem>
      <StatusItem $w={35}><UpArrow /></StatusItem>
      <StatusItem $w={49}>0</StatusItem>
      <StatusItem $w={28}><Pencil /></StatusItem>
      <StatusItem $w={43}>0</StatusItem>
      <StatusItem $w={33}><GitDiamond /></StatusItem>
      <StatusItem $w={54}>ITK</StatusItem>
      <StatusItem $w={36}><BranchIcon /></StatusItem>
      <StatusItem $w={180}>Detached at 1724fc0f</StatusItem>
      <StatusItem $w={10}>
        <svg width="12" height="7" viewBox="0 0 12 7"><path d="M6 0l6 7H0z" fill="#fff" /></svg>
      </StatusItem>
      <BellWrap><Bell /><Badge>2</Badge></BellWrap>
    </StatusBar>
    <TaskEdge>
      <EdgePart $w={72} $c="#1c2b36" />
      <EdgePart $c="#57534f" />
    </TaskEdge>
  </Page>
);

export default App;
